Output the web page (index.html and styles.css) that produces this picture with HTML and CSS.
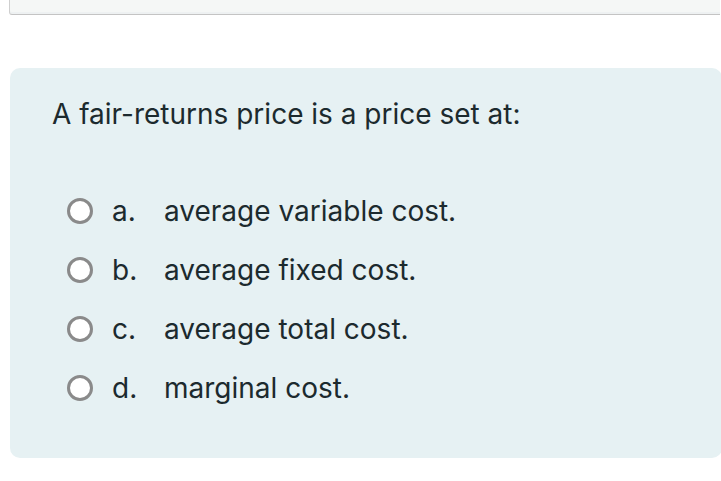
FILE: index.html
```html
<!DOCTYPE html>
<html>
<head>
<meta charset="utf-8">
<link rel="stylesheet" href="styles.css">
</head>
<body>
<div class="page">
  <div class="prev-box"></div>
  <div class="card">
    <p class="question">A fair-returns price is a price set at:</p>
    <ul class="options">
      <li class="option"><span class="radio"></span><span class="letter">a.</span><span class="answer">average variable cost.</span></li>
      <li class="option"><span class="radio"></span><span class="letter">b.</span><span class="answer">average fixed cost.</span></li>
      <li class="option"><span class="radio"></span><span class="letter">c.</span><span class="answer">average total cost.</span></li>
      <li class="option"><span class="radio"></span><span class="letter">d.</span><span class="answer">marginal cost.</span></li>
    </ul>
  </div>
</div>
</body>
</html>
```

FILE: styles.css
```css
html, body {
  margin: 0;
  padding: 0;
  background: #ffffff;
}
body {
  font-family: Inter, "Liberation Sans", sans-serif;
  color: #1c2a2e;
  width: 721px;
  height: 481px;
  overflow: hidden;
}
.page {
  padding-left: 9px;
}
.prev-box {
  height: 15px;
  width: 711px;
  box-sizing: border-box;
  background: #f5f7f6;
  border-left: 1px solid #cfcfcf;
  border-bottom: 1px solid #c4c4c4;
  border-bottom-left-radius: 3px;
  box-shadow: inset 0 -2px 0 #eef1f2;
}
.card {
  margin-top: 53px;
  margin-left: 1px;
  width: 712px;
  height: 390px;
  box-sizing: border-box;
  background: #e6f1f3;
  border-radius: 10px;
  padding: 29px 0 0 42px;
}
.question {
  margin: 0;
  font-size: 28px;
  line-height: 34px;
}
.options {
  list-style: none;
  margin: 64px 0 0 0;
  padding: 0 0 0 15px;
  display: flex;
  flex-direction: column;
  gap: 27px;
}
.option {
  display: flex;
  align-items: center;
  font-size: 28px;
  line-height: 32px;
}
.radio {
  width: 26px;
  height: 26px;
  box-sizing: border-box;
  border: 3px solid #8a8a8a;
  border-radius: 50%;
  background: #ffffff;
  margin-right: 19px;
  flex: none;
}
.letter {
  width: 52px;
}
```
